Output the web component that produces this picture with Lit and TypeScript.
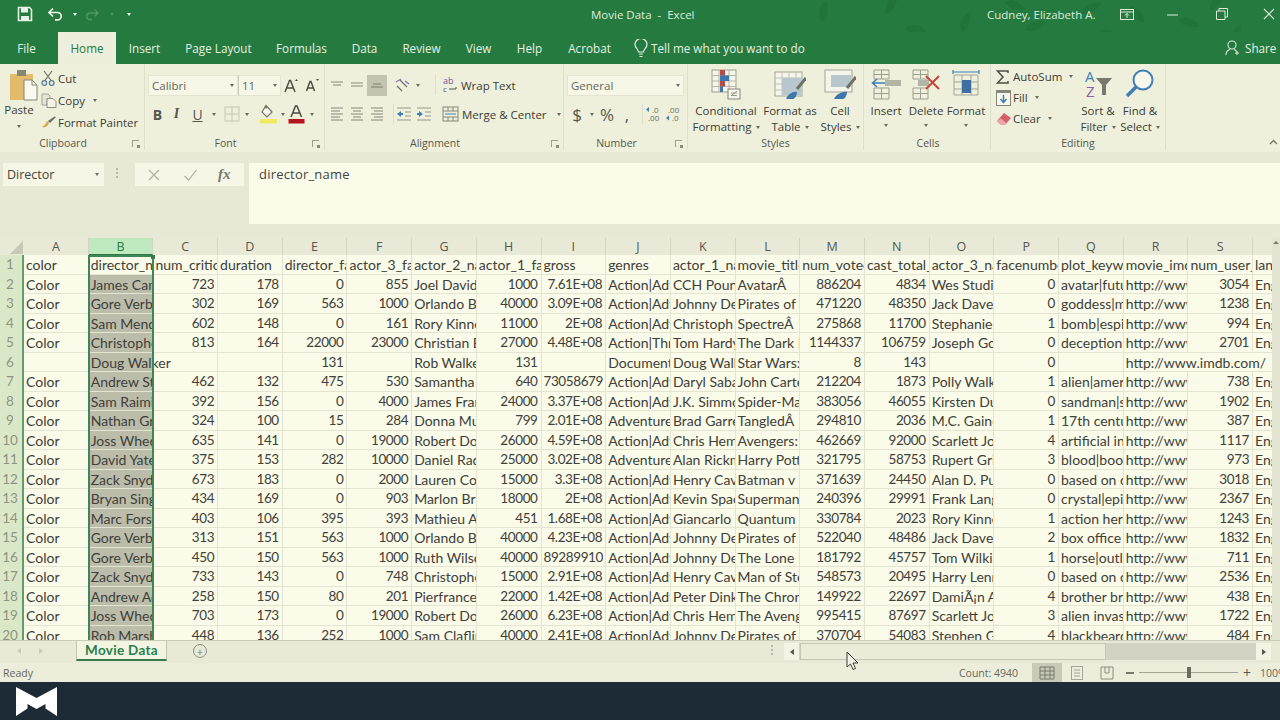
import { LitElement, html, css, svg } from 'lit';
import { customElement } from 'lit/decorators.js';

const COLS = 'ABCDEFGHIJKLMNOPQRS'.split('');
const HEAD = ['color', 'director_name', 'num_critic_for_reviews', 'duration', 'director_facebook_likes', 'actor_3_facebook_likes', 'actor_2_name', 'actor_1_facebook_likes', 'gross', 'genres', 'actor_1_name', 'movie_title', 'num_voted_users', 'cast_total_facebook_likes', 'actor_3_name', 'facenumber_in_poster', 'plot_keywords', 'movie_imdb_link', 'num_user_for_reviews', 'language'];
const W = 'http://www.imdb.com/title';
const ROWS: string[][] = [
  ['Color', 'James Cameron', '723', '178', '0', '855', 'Joel David Moore', '1000', '7.61E+08', 'Action|Adventure', 'CCH Pounder', 'AvatarÂ', '886204', '4834', 'Wes Studi', '0', 'avatar|future', W, '3054', 'English'],
  ['Color', 'Gore Verbinski', '302', '169', '563', '1000', 'Orlando Bloom', '40000', '3.09E+08', 'Action|Adventure', 'Johnny Depp', 'Pirates of the', '471220', '48350', 'Jack Davenport', '0', 'goddess|marriage', W, '1238', 'English'],
  ['Color', 'Sam Mendes', '602', '148', '0', '161', 'Rory Kinnear', '11000', '2E+08', 'Action|Adventure', 'Christoph Waltz', 'SpectreÂ', '275868', '11700', 'Stephanie Sigman', '1', 'bomb|espionage', W, '994', 'English'],
  ['Color', 'Christopher Nolan', '813', '164', '22000', '23000', 'Christian Bale', '27000', '4.48E+08', 'Action|Thriller', 'Tom Hardy', 'The Dark Knight', '1144337', '106759', 'Joseph Gordon', '0', 'deception', W, '2701', 'English'],
  ['', 'Doug Walker', '', '', '131', '', 'Rob Walker', '131', '', 'Documentary', 'Doug Walker', 'Star Wars:', '8', '143', '', '0', '', 'http://www.imdb.com/', '', ''],
  ['Color', 'Andrew Stanton', '462', '132', '475', '530', 'Samantha Morton', '640', '73058679', 'Action|Adventure', 'Daryl Sabara', 'John Carter', '212204', '1873', 'Polly Walker', '1', 'alien|american', W, '738', 'English'],
  ['Color', 'Sam Raimi', '392', '156', '0', '4000', 'James Franco', '24000', '3.37E+08', 'Action|Adventure', 'J.K. Simmons', 'Spider-Man', '383056', '46055', 'Kirsten Dunst', '0', 'sandman|spider', W, '1902', 'English'],
  ['Color', 'Nathan Greno', '324', '100', '15', '284', 'Donna Murphy', '799', '2.01E+08', 'Adventure|Animation', 'Brad Garrett', 'TangledÂ', '294810', '2036', 'M.C. Gainey', '1', '17th century', W, '387', 'English'],
  ['Color', 'Joss Whedon', '635', '141', '0', '19000', 'Robert Downey', '26000', '4.59E+08', 'Action|Adventure', 'Chris Hemsworth', 'Avengers:', '462669', '92000', 'Scarlett Johansson', '4', 'artificial intel', W, '1117', 'English'],
  ['Color', 'David Yates', '375', '153', '282', '10000', 'Daniel Radcliffe', '25000', '3.02E+08', 'Adventure|Family', 'Alan Rickman', 'Harry Potter', '321795', '58753', 'Rupert Grint', '3', 'blood|book', W, '973', 'English'],
  ['Color', 'Zack Snyder', '673', '183', '0', '2000', 'Lauren Cohan', '15000', '3.3E+08', 'Action|Adventure', 'Henry Cavill', 'Batman v', '371639', '24450', 'Alan D. Purwin', '0', 'based on comic', W, '3018', 'English'],
  ['Color', 'Bryan Singer', '434', '169', '0', '903', 'Marlon Brando', '18000', '2E+08', 'Action|Adventure', 'Kevin Spacey', 'Superman', '240396', '29991', 'Frank Langella', '0', 'crystal|epic', W, '2367', 'English'],
  ['Color', 'Marc Forster', '403', '106', '395', '393', 'Mathieu Amalric', '451', '1.68E+08', 'Action|Adventure', 'Giancarlo', 'Quantum', '330784', '2023', 'Rory Kinnear', '1', 'action hero', W, '1243', 'English'],
  ['Color', 'Gore Verbinski', '313', '151', '563', '1000', 'Orlando Bloom', '40000', '4.23E+08', 'Action|Adventure', 'Johnny Depp', 'Pirates of', '522040', '48486', 'Jack Davenport', '2', 'box office', W, '1832', 'English'],
  ['Color', 'Gore Verbinski', '450', '150', '563', '1000', 'Ruth Wilson', '40000', '89289910', 'Action|Adventure', 'Johnny Depp', 'The Lone Ranger', '181792', '45757', 'Tom Wilkinson', '1', 'horse|outlaw', W, '711', 'English'],
  ['Color', 'Zack Snyder', '733', '143', '0', '748', 'Christopher Meloni', '15000', '2.91E+08', 'Action|Adventure', 'Henry Cavill', 'Man of Steel', '548573', '20495', 'Harry Lennix', '0', 'based on comic', W, '2536', 'English'],
  ['Color', 'Andrew Adamson', '258', '150', '80', '201', 'Pierfrancesco', '22000', '1.42E+08', 'Action|Adventure', 'Peter Dinklage', 'The Chronicles', '149922', '22697', 'DamiÃ¡n Alcazar', '4', 'brother brother', W, '438', 'English'],
  ['Color', 'Joss Whedon', '703', '173', '0', '19000', 'Robert Downey', '26000', '6.23E+08', 'Action|Adventure', 'Chris Hemsworth', 'The Avengers', '995415', '87697', 'Scarlett Johansson', '3', 'alien invasion', W, '1722', 'English'],
  ['Color', 'Rob Marshall', '448', '136', '252', '1000', 'Sam Claflin', '40000', '2.41E+08', 'Action|Adventure', 'Johnny Depp', 'Pirates of the', '370704', '54083', 'Stephen Graham', '4', 'blackbeard', W, '484', 'English'],
];

const icon = (w: number, h: number, body: unknown) =>
  html`<svg class="ic" width=${w} height=${h} viewBox="0 0 ${w} ${h}">${body}</svg>`;

const lines = (rows: [number, number, number][], color = '#77796c') =>
  rows.map(([y, a, b]) => svg`<line x1=${a} x2=${b} y1=${y} y2=${y} stroke=${color} stroke-width="1"/>`);

const IC = {
  save: icon(16, 16, svg`<path d="M1.5 1.5h11l2 2v11h-13z" fill="none" stroke="#e8f1e6" stroke-width="1.6"/><rect x="4" y="2" width="7" height="4.5" fill="#e8f1e6"/><rect x="4" y="10" width="8" height="4.5" fill="#e8f1e6"/>`),
  undo: icon(16, 14, svg`<path d="M1 5.5h8.5a3.6 3.6 0 0 1 0 7.4H7" fill="none" stroke="#eef5ea" stroke-width="1.7"/><path d="M5 1.5 1 5.5l4 4" fill="none" stroke="#eef5ea" stroke-width="1.7"/>`),
  redo: icon(14, 13, svg`<path d="M13 5H5a3 3 0 0 0 0 6.5h2M9.5 1.5 13 5l-3.500 3.500" fill="none" stroke="#4d9a67" stroke-width="1.400"/>`),
  clip: icon(30, 32, svg`<rect x="0" y="5" width="23" height="26" fill="#e3bb6c"/><rect x="7" y="1" width="9" height="6" fill="#8a8674"/><path d="M14 11h8l5 5v15H14z" fill="#f9f9ee" stroke="#85877a"/><path d="M22 11v5h5" fill="none" stroke="#85877a"/>`),
  cut: icon(14, 16, svg`<path d="M3 1l7.500 10M11 1 3.500 11" stroke="#6f7165" stroke-width="1.200" fill="none"/><circle cx="3.300" cy="13" r="2.300" fill="none" stroke="#5a7d99" stroke-width="1.300"/><circle cx="10.700" cy="13" r="2.300" fill="none" stroke="#5a7d99" stroke-width="1.300"/>`),
  copy: icon(16, 15, svg`<path d="M1 1h6l2 2v3H6v6H1z" fill="#e6e6d6" stroke="#a3a597"/><path d="M6 5.500h6l3 3v6H6z" fill="#f5f5e8" stroke="#8c8e80"/>`),
  painter: icon(16, 13, svg`<path d="M1 11c3 1 6-1 7-4L6 5C5 8 3 10 1 11z" fill="#d9a64a"/><path d="M7 5l2 2 6-6-1.500-.5z" fill="#6a6c60"/>`),
  bigA: icon(14, 15, svg`<path d="M1 14 5.500 2.500h1L11 14M3 10h7" fill="none" stroke="#4d4f46" stroke-width="1.500"/><path d="M11 3l1.500-2L14 3z" fill="#4d4f46"/>`),
  smallA: icon(14, 14, svg`<path d="M1.500 13 5 3.500h1L9.500 13M3 10h5" fill="none" stroke="#4d4f46" stroke-width="1.500"/><path d="M11 1l1.500 2L14 1z" fill="#4d4f46"/>`),
  borders: icon(16, 16, svg`<rect x="1" y="1" width="14" height="14" fill="none" stroke="#c5c7b8"/><path d="M8 1v14M1 8h14" stroke="#c5c7b8"/>`),
  fill: icon(20, 20, svg`<path d="M8 1.500 14 8l-5 5-5-5z" fill="#f7f7ec" stroke="#77796c" stroke-width="1.200"/><circle cx="8" cy="3" r="1.500" fill="#77796c"/><rect x="2" y="15" width="17" height="4.500" fill="#f0ea62"/>`),
  fontColor: icon(17, 20, svg`<path d="M3 13 7.500 2h1.500L13.500 13M5 9h6.500" fill="none" stroke="#4a4c44" stroke-width="1.500"/><rect x="0.500" y="15" width="16" height="4.500" fill="#b4141e"/>`),
  alT: icon(14, 8, lines([[1, 1, 13], [4, 3, 11]], '#8a8c7e')),
  alM: icon(14, 8, lines([[2, 1, 13], [5, 1, 13]], '#8a8c7e')),
  alB: icon(14, 10, lines([[4, 3, 11], [7, 1, 13]], '#7f8174')),
  orient: icon(16, 14, svg`<path d="M2 8l5 5M5 2l7 7" stroke="#6f7165" stroke-width="1.200" fill="none"/><path d="M1 4l5-3M10 3l4 3" stroke="#8c6fb0" stroke-width="1.200" fill="none"/>`),
  alL: icon(14, 14, lines([[1, 1, 13], [4, 1, 10], [7, 1, 13], [10, 1, 10], [13, 1, 13]], '#85877a')),
  alC: icon(14, 14, lines([[1, 1, 13], [4, 3, 11], [7, 1, 13], [10, 3, 11], [13, 1, 13]], '#85877a')),
  alR: icon(14, 14, lines([[1, 1, 13], [4, 4, 13], [7, 1, 13], [10, 4, 13], [13, 1, 13]], '#85877a')),
  indL: icon(16, 14, svg`${lines([[1, 1, 15], [13, 1, 15], [5, 9, 15], [9, 9, 15]], '#97998b')}<path d="M1 7l4-3v6z" fill="#3f7fb5"/><rect x="4" y="6" width="3" height="2" fill="#3f7fb5"/>`),
  indR: icon(16, 14, svg`${lines([[1, 1, 15], [13, 1, 15], [5, 9, 15], [9, 9, 15]], '#97998b')}<path d="M7 7 3 4v6z" fill="#3f7fb5"/><rect x="1" y="6" width="3" height="2" fill="#3f7fb5"/>`),
  wrap: icon(14, 16, svg`<text x="0" y="7" font-size="9" fill="#6f5a9c" font-family="Open Sans">ab</text><text x="0" y="15" font-size="8" fill="#555" font-family="Open Sans">c</text><path d="M6 12h7v-2" stroke="#555" fill="none"/>`),
  merge: icon(17, 16, svg`<rect x="1" y="1" width="15" height="14" fill="none" stroke="#85877a"/><path d="M1 5h15M1 11h15M6 1v4M11 1v4M6 11v4M11 11v4" stroke="#85877a"/><path d="M3 8h11" stroke="#3f7fb5"/>`),
  dec1: icon(18, 16, svg`<path d="M1 3.500 4 1v5z" fill="#3f7fb5"/><text x="7" y="7" font-size="8" fill="#6a6c60" font-family="Open Sans">.0</text><text x="3" y="15" font-size="8" fill="#6a6c60" font-family="Open Sans">.00</text>`),
  dec2: icon(18, 16, svg`<text x="3" y="7" font-size="8" fill="#6a6c60" font-family="Open Sans">.00</text><path d="M1 12l3-2.500v5z" fill="#3f7fb5"/><text x="7" y="15" font-size="8" fill="#6a6c60" font-family="Open Sans">.0</text>`),
  cond: icon(30, 31, svg`<rect x="1" y="1" width="24" height="22" fill="#f5f5e9" stroke="#9d9f91"/><path d="M1 6.500h24M1 12h24M1 17.500h24M8 1v22M18 1v22" stroke="#b5b7a9"/><rect x="9" y="1" width="5" height="5.500" fill="#b84a45"/><rect x="9" y="6.500" width="9" height="5.500" fill="#3e77ab"/><rect x="9" y="12" width="5" height="5.500" fill="#b84a45"/><rect x="9" y="17.500" width="3" height="5.500" fill="#3e77ab"/><rect x="17" y="20" width="12" height="10" fill="#f5f5e9" stroke="#85877a"/><path d="M20 27l6-5M20 24h6M20 26.500h6" stroke="#85877a" stroke-width=".8"/>`),
  table: icon(32, 31, svg`<rect x="1" y="3" width="27" height="24" fill="#f5f5e9" stroke="#a3a597"/><path d="M1 9h27M1 15h27M1 21h27M8 3v24M15 3v24M22 3v24" stroke="#c0c2b4"/><rect x="8" y="9" width="19" height="17" fill="#b8c6ce"/><path d="M32 9l-9 11" stroke="#6e7064" stroke-width="3"/><path d="M12 30c2-5 7-8 11-7 0 3-2 7-4 7z" fill="#3e77ab"/>`),
  cellst: icon(32, 31, svg`<rect x="1" y="1" width="27" height="22" fill="#f5f5e9" stroke="#a3a597"/><rect x="7" y="6" width="20" height="12" fill="#b8c6ce"/><path d="M32 8l-9 11" stroke="#6e7064" stroke-width="3"/><path d="M10 30c2-5 9-8 13-7 0 3-2 7-4 7z" fill="#3e77ab"/>`),
  insert: icon(30, 32, svg`<path d="M3 1h15v9H3zM3 5.500h15M10.500 1v9M3 19h15v11H3zM3 24.500h15M10.500 19v11" fill="none" stroke="#9d9f91"/><rect x="14" y="11" width="16" height="6" fill="#b2b4a6"/><path d="M1 14h13M6 10l-4.500 4L6 18" fill="none" stroke="#3f7fb5" stroke-width="1.500"/>`),
  del: icon(32, 32, svg`<path d="M3 1h15v9H3zM3 5.500h15M10.500 1v9M3 19h15v11H3zM3 24.500h15M10.500 19v11" fill="none" stroke="#9d9f91"/><rect x="8" y="11" width="11" height="6" fill="#b2b4a6"/><path d="M16 7l13 13M29 7 16 20" stroke="#c4483c" stroke-width="2"/>`),
  format: icon(30, 33, svg`<path d="M3 6h24v20H3zM3 13h24M3 20h24M11 6v20M20 6v20" fill="none" stroke="#a3a597"/><rect x="11" y="11" width="9" height="13" fill="#3e6fa3"/><path d="M2 3h26M2 1v4M28 1v4" stroke="#3f7fb5" stroke-width="1.200"/>`),
  sigma: icon(13, 14, svg`<path d="M12 3V1H1.500L7 7 1.500 13H12v-2" fill="none" stroke="#4d4f46" stroke-width="1.500"/>`),
  fillDown: icon(15, 16, svg`<rect x=".5" y=".5" width="14" height="15" fill="#f7f7ec" stroke="#85877a"/><path d="M1 2h13" stroke="#85877a" stroke-width="2"/><path d="M7.500 5v7M4.500 9l3 3.500 3-3.500" stroke="#3f7fb5" stroke-width="1.500" fill="none"/>`),
  eraser: icon(16, 14, svg`<path d="M1 9l7-8 7 5-6 7H5z" fill="#d5606b"/><path d="M1 9l4 4h4l1.500-1.700L5 6.500z" fill="#eaa6ad"/>`),
  sort: icon(30, 30, svg`<text x="2" y="13" font-size="15" fill="#3f7fb5" font-family="Open Sans">A</text><text x="3" y="28" font-size="15" fill="#8c5fa8" font-family="Open Sans">Z</text><path d="M13 9h16l-6 7v10h-4V16z" fill="#77796c"/>`),
  find: icon(30, 30, svg`<circle cx="18" cy="11" r="9.500" fill="#f7f7ec" stroke="#3f7fb5" stroke-width="2"/><path d="M11 18 2 27" stroke="#3f7fb5" stroke-width="3.500"/>`),
  bulb: icon(14, 19, svg`<path d="M4.500 13c0-3-3.500-4-3.500-7.500a6 6 0 0 1 12 0C13 9 9.500 10 9.500 13z" fill="none" stroke="#e6f0e2" stroke-width="1.200"/><path d="M5 15h4M5.500 17.500h3" stroke="#e6f0e2" stroke-width="1.200"/>`),
  share: icon(16, 16, svg`<circle cx="7" cy="5" r="4" fill="none" stroke="#dfeadb" stroke-width="1.100"/><path d="M1 15c0-3 2-5 4-5.500M9 9.500c1 .3 2 1 2.500 2M12 11v4M10 13h4" fill="none" stroke="#dfeadb" stroke-width="1.100"/>`),
  cross: icon(14, 14, svg`<path d="M2 2l10 10M12 2 2 12" stroke="#b0b2a4" stroke-width="1.200"/>`),
  check: icon(15, 14, svg`<path d="M1.500 8l4 4L13.500 2" fill="none" stroke="#b0b2a4" stroke-width="1.200"/>`),
  ribbonOpt: icon(14, 11, svg`<rect x=".5" y=".5" width="13" height="10" fill="none" stroke="#dfeadb"/><path d="M.5 3h13M7 9V4.500M5 6.500l2-2 2 2" stroke="#dfeadb" fill="none"/>`),
  minimize: icon(11, 11, svg`<path d="M0 6h11" stroke="#dfeadb"/>`),
  restore: icon(12, 12, svg`<path d="M.5 3h8.500v8.500H.5zM3 3V.5h8.500V9H9" fill="none" stroke="#dfeadb"/>`),
  close: icon(12, 12, svg`<path d="M1 1l10 10M11 1 1 11" stroke="#dfeadb" stroke-width="1.100"/>`),
  viewNormal: icon(16, 14, svg`<path d="M1 1h14v12H1zM1 5h14M1 9h14M6 1v12M11 1v12" fill="none" stroke="#77796c"/>`),
  viewPage: icon(12, 14, svg`<rect x=".5" y=".5" width="11" height="13" fill="none" stroke="#a3a597"/><path d="M3 4h6M3 7h6M3 10h6" stroke="#a3a597"/>`),
  viewBreak: icon(14, 14, svg`<path d="M1 1h12v12H1zM5 1v6h4V1" fill="none" stroke="#8c8e80"/>`),
  collapse: icon(9, 6, svg`<path d="M1 5l3.500-3.500L8 5" fill="none" stroke="#77796c" stroke-width="1.300"/>`),
};

const LEAF = 'M0 0C5-6 15-6 22 0 15 5 5 5 0 0z';
const LEAVES: [number, number, number][] = [
  [886, 14, -60], [905, 28, 10], [962, 32, -70], [1005, 2, 20], [1045, 22, 160], [1082, 14, -30],
  [1100, 30, 30], [1130, 6, 50], [1178, 20, 15], [1210, 10, -50], [1240, 26, 120], [822, 22, -80], [1150, 36, 20],
];

@customElement('app-root')
export class AppRoot extends LitElement {
  static styles = css`
    :host {
      display: flex;
      flex-direction: column;
      width: 1280px;
      height: 720px;
      overflow: hidden;
      background: #ebecda;
      color: #3b3d36;
      font-family: 'Open Sans', sans-serif;
      font-size: 11.5px;
      position: relative;
    }
    .ic { display: block; flex: none; }

    .titlebar {
      height: 32px;
      padding-bottom: 4px;
      box-sizing: border-box;
      background: #257b3f;
      color: #dfeadb;
      display: flex;
      align-items: center;
      position: relative;
      overflow: hidden;
      flex: none;
    }
    .leaves { position: absolute; left: 0; top: 0; }
    .qat { width: 591px; display: flex; align-items: center; padding-left: 17px; box-sizing: border-box; flex: none; gap: 3px; position: relative; }
    .qat .undo { margin-left: 12px; }
    .tcaret { width: 0; height: 0; border: 2.5px solid transparent; border-top: 3px solid #eef5ea; border-bottom: 0; margin-left: 6px; }
    .tcaret.off { border-top-color: #4d9a67; margin-left: 8px; }
    .qat .redo { margin-left: 5px; }
    .qat .custom { margin-left: 10px; }
    .doc { width: 396px; flex: none; font-size: 11.5px; position: relative; white-space: pre; }
    .user { width: 133px; flex: none; font-size: 11.5px; position: relative; }
    .winbtn { display: flex; align-items: center; position: relative; }
    .winbtn .restore { margin-left: 38px; }
    .winbtn .minimize { margin-left: 33px; }
    .winbtn .close { margin-left: 35px; }

    .tabs {
      height: 32px;
      background: #257b3f;
      color: #e6f0e2;
      display: flex;
      align-items: center;
      flex: none;
      font-size: 11.7px;
    }
    .tab { box-sizing: border-box; text-align: center; height: 32px; line-height: 33px; flex: none; }
    .tab.file { width: 58px; padding-right: 5px; }
    .tab.home { width: 58px; background: #edeedb; color: #257b3f; }
    .tab.w-ins { width: 57px; }
    .tab.w-pl { width: 91px; }
    .tab.w-for { width: 75px; }
    .tab.w-dat { width: 51px; }
    .tab.w-rev { width: 63px; }
    .tab.w-vie { width: 51px; }
    .tab.w-hel { width: 51px; }
    .tab.w-acr { width: 67px; margin-left: 1px; }
    .tell { display: flex; align-items: center; gap: 3px; margin-left: 11px; width: 591px; }
    .shr { display: flex; align-items: center; gap: 4px; }

    .ribbon {
      height: 88px;
      background: #eef0dc;
      display: flex;
      flex: none;
      white-space: nowrap;
    }
    .collapse { margin-left: auto; align-self: flex-end; padding: 0 2px 7px 0; }
    .group {
      box-sizing: border-box;
      border-right: 1px solid #dddfcb;
      display: flex;
      flex-direction: column;
      height: 86px;
      flex: none;
    }
    .gbody { height: 71px; display: flex; flex: none; }
    .glabel {
      flex: 1;
      display: flex;
      justify-content: center;
      align-items: center;
      position: relative;
      font-size: 10.5px;
      color: #55574d;
    }
    .glabel.lc { padding-right: 18px; }
    .launch { position: absolute; right: 5px; top: 5px; width: 6px; height: 6px; border-left: 1px solid #9d9f91; border-top: 1px solid #9d9f91; }
    .launch::after { content: ''; position: absolute; right: -1px; bottom: -1px; width: 3px; height: 3px; background: #8a8c7e; }

    .caret { width: 0; height: 0; border: 2.5px solid transparent; border-top: 3px solid #6a6c60; border-bottom: 0; flex: none; }
    .g-clip { width: 145px; }
    .paste { width: 41px; display: flex; flex-direction: column; align-items: center; padding-top: 5px; box-sizing: border-box; flex: none; }
    .paste .art { margin-left: 8px; }
    .paste .lb { margin-top: 1px; line-height: 16px; margin-right: 3px; }
    .paste .caret { margin-top: 7px; margin-right: 3px; }
    .clip-list { display: flex; flex-direction: column; padding-top: 3px; }
    .cl { display: flex; align-items: center; height: 22px; }
    .cl .slot { width: 17px; flex: none; }
    .cl .caret { margin-left: 8px; }

    .g-font { width: 180px; }
    .two { display: flex; flex-direction: column; flex: 1; padding-top: 11px; gap: 9px; }
    .r { display: flex; align-items: center; height: 20px; }
    .combo { box-sizing: border-box; height: 21px; background: #f6f7e7; border: 1px solid #e3e5d1; display: flex; align-items: center; justify-content: space-between; padding: 0 3px; color: #66685c; }
    .combo.font { width: 90px; margin-left: 3px; }
    .combo.size { width: 43px; border-left-color: #c9cbb9; }
    .r .a-big { margin-left: 3px; }
    .r .a-small { margin-left: 7px; }
    .fmt { width: 19px; text-align: center; font-size: 14px; color: #55574d; font-family: 'Liberation Serif', serif; }
    .fmt.b { font-weight: 700; font-family: 'Open Sans', sans-serif; margin-left: 3px; }
    .fmt.i { font-style: italic; font-weight: 700; }
    .fmt.u { text-decoration: underline; font-family: 'Open Sans', sans-serif; margin-left: 2px; }
    .r .caret.sm { margin: 0 5px; }
    .r .caret.fc { margin: 0 3px; }
    .b-slot { margin-left: 3px; }
    .f-slot { margin-left: 4px; }

    .g-align { width: 239px; }
    .al-top { width: 20px; height: 21px; display: flex; align-items: center; justify-content: center; flex: none; }
    .al-top.first { margin-left: 2px; }
    .al-top.on { background: #c2c3b0; }
    .al-gap { margin-left: 8px; }
    .sep { width: 1px; height: 20px; background: #dddfcb; flex: none; margin-left: 6px; }
    .sep.w { margin: 0 4px 0 10px; }
    .wt { display: flex; align-items: center; gap: 4px; margin-left: 3px; }
    .ind { width: 20px; display: flex; justify-content: center; flex: none; }
    .mg { margin-left: 8px; display: flex; align-items: center; gap: 3px; }
    .mg .caret { margin-left: 7px; }

    .g-num { width: 124px; }
    .combo.gen { width: 117px; margin-left: 3px; }
    .sym { font-size: 17px; color: #55574d; width: 20px; text-align: center; flex: none; }
    .num-row { padding-left: 3px; }
    .num-row .caret { margin: 0 3px; }
    .num-row .sep { margin: 0 2px 0 5px; }
    .num-row .d2 { margin-left: 2px; }

    .g-sty { width: 176px; }
    .big { display: flex; flex-direction: column; align-items: center; padding-top: 5px; box-sizing: border-box; flex: none; line-height: 16px; }
    .big .art { height: 33px; display: flex; align-items: flex-start; justify-content: center; margin-bottom: 1px; }
    .bl { display: flex; align-items: center; gap: 4px; white-space: nowrap; }
    .sty-cf { width: 76px; }
    .sty-ft { width: 60px; margin-left: -4px; }
    .sty-cs { width: 40px; }
    .g-cel { width: 127px; padding-left: 2px; }
    .cel { width: 40px; }
    .cel .caret { margin-top: 5px; }
    .g-edi { width: 175px; }
    .edi-list { display: flex; flex-direction: column; padding: 2px 0 0 5px; width: 87px; box-sizing: border-box; flex: none; }
    .edi-list .cl { height: 21px; }
    .edi-list .slot { width: 17px; }
    .edi-list .caret { margin-left: 7px; }
    .sf { width: 40px; }
    .sf2 { width: 36px; margin-left: 4px; }

    .gapband { height: 11px; background: #e7e8d5; flex: none; }
    .formula { height: 62px; background: #e7e8d5; display: flex; align-items: flex-start; flex: none; }
    .namebox { box-sizing: border-box; width: 101px; height: 23px; margin-left: 3px; background: #f5f6e5; display: flex; align-items: center; justify-content: space-between; padding: 0 5px 0 4px; font-size: 12.500px; color: #44463d; flex: none; }
    .dots { margin-left: 12px; width: 3px; display: flex; flex-direction: column; gap: 2px; padding-top: 5px; }
    .dots i { display: block; width: 2px; height: 2px; background: #b5b7a9; }
    .fxbox { box-sizing: border-box; width: 109px; height: 23px; margin-left: 16px; background: #f5f6e5; display: flex; align-items: center; padding-left: 12px; flex: none; color: #77796c; }
    .fxbox .check { margin-left: 22px; }
    .fxbox .fx { margin-left: 20px; font-family: 'Liberation Serif', serif; font-style: italic; font-size: 15px; font-weight: 700; }
    .fbar { flex: 1; height: 61px; margin-left: 5px; background: #fafbe9; font-size: 13px; color: #44463d; padding: 2px 10px; box-sizing: border-box; letter-spacing: .2px; }
    .fgap { height: 13px; background: #e7e8d5; flex: none; }

    .sheetwrap { height: 402px; position: relative; overflow: hidden; flex: none; background: #fafbe9; }
    .sheet {
      display: grid;
      grid-template-columns: 24px repeat(19, 64.7px) 20px;
      grid-template-rows: 17px;
      grid-auto-rows: 19.5px;
      font-family: Lato, sans-serif;
      font-size: 14px;
      color: #3e4039;
    }
    .corner { background: #e8e9d6; display: flex; align-items: flex-end; justify-content: flex-end; padding: 0 1px 1px 0; box-sizing: border-box; }
    .corner::after { content: ''; width: 0; height: 0; border-left: 13px solid transparent; border-bottom: 13px solid #c6c8b8; }
    .ch { background: #e8e9d6; border-right: 1px solid #d2d4c1; text-align: center; line-height: 17px; color: #55574d; box-sizing: border-box; font-family: 'Open Sans', sans-serif; font-size: 12.500px; }
    .ch.on { background: #bfeac0; color: #2b7a45; border-bottom: 1px solid #2b7a45; }
    .rh { background: #dbe8c8; border-right: 2px solid #5f9c72; color: #8d9483; text-align: center; font-size: 13.500px; line-height: 19.5px; box-sizing: border-box; padding-right: 2px; }
    .c {
      box-sizing: border-box;
      border-right: 1px solid #e3e5d0;
      border-bottom: 1px solid #e3e5d0;
      line-height: 19.5px;
      padding: 0 3px 0 2px;
      white-space: nowrap;
      overflow: hidden;
      min-width: 0;
    }
    .c.n { text-align: right; font-size: 13.5px; letter-spacing: -.4px; }
    .c.s { background: #bbbcaa; }
    .c.over { overflow: visible; position: relative; z-index: 1; border-right-color: transparent; }
    .c.span3 { grid-column: span 3; }
    .sel {
      position: absolute;
      left: 88px;
      top: 17px;
      width: 66px;
      height: 400px;
      box-sizing: border-box;
      border: 2px solid #3f8558;
      border-bottom: 0;
      pointer-events: none;
      z-index: 2;
    }
    .handle { position: absolute; right: -3px; top: -2px; width: 4px; height: 4px; background: #35794c; }
    .vscroll { position: absolute; right: 0; top: 0; width: 8px; height: 402px; background: #e3e4d2; }
    .vscroll::before { content: ''; position: absolute; left: 1px; top: 3px; border: 3px solid transparent; border-bottom: 3px solid #77796c; border-top: 0; }

    .sheetbar { height: 23px; background: #e8e9d6; border-top: 1px solid #c9cbb9; box-sizing: border-box; display: flex; align-items: flex-start; flex: none; position: relative; }
    .nav { width: 76px; display: flex; align-items: center; padding: 7px 0 0 17px; gap: 18px; box-sizing: border-box; flex: none; }
    .nav i { width: 0; height: 0; border: 3px solid transparent; display: block; }
    .nav .l { border-right: 4px solid #c9cbb9; border-left: 0; }
    .nav .r2 { border-left: 4px solid #c9cbb9; border-right: 0; }
    .stab { width: 91px; height: 20px; background: #f3f4e2; border: 1px solid #c3c5b3; border-top: 0; border-bottom: 2px solid #35794c; box-sizing: border-box; text-align: center; color: #2b7f4a; font-weight: 700; font-size: 13.5px; line-height: 18px; flex: none; font-family: Lato, sans-serif; letter-spacing: .3px; }
    .plus { width: 14px; height: 14px; border: 1px solid #8c8e80; border-radius: 50%; margin: 3px 0 0 26px; box-sizing: border-box; display: flex; align-items: center; justify-content: center; color: #77796c; font-size: 11px; line-height: 1; flex: none; }
    .sdots { margin-left: 564px; margin-top: 4px; display: flex; flex-direction: column; gap: 2px; width: 13px; flex: none; }
    .sdots i { width: 2px; height: 2px; background: #b5b7a9; display: block; }
    .hs { display: flex; width: 487px; height: 17px; margin-top: 2px; background: #d2d3c2; flex: none; align-items: stretch; }
    .hs .arr { width: 15px; background: #f3f4e3; display: flex; align-items: center; justify-content: center; flex: none; }
    .hs .thumb { width: 306px; background: #eaebd9; border: 1px solid #c5c7b5; box-sizing: border-box; margin-left: 1px; flex: none; }
    .hs .fillr { flex: 1; }
    .tl { width: 0; height: 0; border: 3px solid transparent; border-right: 4px solid #55574d; border-left: 0; }
    .tr { width: 0; height: 0; border: 3px solid transparent; border-left: 4px solid #55574d; border-right: 0; }

    .status { height: 19px; background: #eceddb; display: flex; align-items: center; flex: none; font-size: 10.500px; color: #66685c; }
    .status .ready { width: 959px; padding-left: 3px; box-sizing: border-box; flex: none; }
    .status .count { width: 73px; flex: none; white-space: nowrap; }
    .vb { width: 30px; height: 19px; display: flex; align-items: center; justify-content: center; flex: none; }
    .vb.on { background: #c8cab7; }
    .zoomctl { display: flex; align-items: center; margin-left: 4px; flex: none; }
    .zm { width: 8px; height: 2px; background: #77796c; flex: none; }
    .zline { position: relative; width: 99px; height: 1px; background: #a3a597; margin: 0 4px 0 5px; flex: none; }
    .zline::after { content: ''; position: absolute; left: 48px; top: -5px; width: 4px; height: 11px; background: #6a6c60; }
    .zp { font-size: 14px; color: #55574d; width: 10px; line-height: 1; text-align: center; flex: none; }
    .pct { margin-left: 8px; white-space: nowrap; flex: none; }

    .band { flex: 1; background: #1c2b36; display: flex; align-items: center; padding-left: 16px; }
    .pointer { position: absolute; left: 846px; top: 651px; }
  `;

  private group(cls: string, label: string, launch: boolean, body: unknown) {
    return html`<div class="group ${cls}">
      <div class="gbody">${body}</div>
      <div class="glabel ${launch ? 'lc' : ''}">${label}${launch ? html`<span class="launch"></span>` : ''}</div>
    </div>`;
  }

  private renderTitle() {
    return html`<div class="titlebar">
      <svg class="leaves" width="1280" height="32">
        ${LEAVES.map(([x, y, r]) => svg`<path d=${LEAF} transform="translate(${x} ${y}) rotate(${r})" fill="#1f7238" opacity=".8"/>`)}
      </svg>
      <div class="qat">
        ${IC.save}<span class="undo">${IC.undo}</span><span class="tcaret"></span>
        <span class="redo">${IC.redo}</span><span class="tcaret off"></span>
        <span class="tcaret custom"></span>
      </div>
      <div class="doc">Movie Data  -  Excel</div>
      <div class="user">Cudney, Elizabeth A.</div>
      <div class="winbtn">${IC.ribbonOpt}<span class="minimize">${IC.minimize}</span><span class="restore">${IC.restore}</span><span class="close">${IC.close}</span></div>
    </div>`;
  }

  private renderTabs() {
    return html`<div class="tabs">
      <div class="tab file">File</div>
      <div class="tab home">Home</div>
      <div class="tab w-ins">Insert</div>
      <div class="tab w-pl">Page Layout</div>
      <div class="tab w-for">Formulas</div>
      <div class="tab w-dat">Data</div>
      <div class="tab w-rev">Review</div>
      <div class="tab w-vie">View</div>
      <div class="tab w-hel">Help</div>
      <div class="tab w-acr">Acrobat</div>
      <div class="tell">${IC.bulb}<span>Tell me what you want to do</span></div>
      <div class="shr">${IC.share}<span>Share</span></div>
    </div>`;
  }

  private renderRibbon() {
    const caret = html`<span class="caret"></span>`;
    return html`<div class="ribbon">
      ${this.group('g-clip', 'Clipboard', true, html`
        <div class="paste"><span class="art">${IC.clip}</span><span class="lb">Paste</span>${caret}</div>
        <div class="clip-list">
          <div class="cl"><span class="slot">${IC.cut}</span><span>Cut</span></div>
          <div class="cl"><span class="slot">${IC.copy}</span><span>Copy</span>${caret}</div>
          <div class="cl"><span class="slot">${IC.painter}</span><span>Format Painter</span></div>
        </div>`)}
      ${this.group('g-font', 'Font', true, html`
        <div class="two">
          <div class="r">
            <div class="combo font"><span>Calibri</span>${caret}</div>
            <div class="combo size"><span>11</span>${caret}</div>
            <span class="a-big">${IC.bigA}</span><span class="a-small">${IC.smallA}</span>
          </div>
          <div class="r">
            <span class="fmt b">B</span><span class="fmt i">I</span><span class="fmt u">U</span>
            <span class="caret sm"></span><span class="b-slot">${IC.borders}</span><span class="caret sm"></span>
            <span class="f-slot">${IC.fill}</span><span class="caret fc"></span>${IC.fontColor}<span class="caret sm"></span>
          </div>
        </div>`)}
      ${this.group('g-align', 'Alignment', true, html`
        <div class="two">
          <div class="r">
            <span class="al-top first">${IC.alT}</span><span class="al-top">${IC.alM}</span><span class="al-top on">${IC.alB}</span>
            <span class="al-gap">${IC.orient}</span><span class="caret sm"></span>
            <span class="sep w"></span>
            <span class="wt">${IC.wrap}<span>Wrap Text</span></span>
          </div>
          <div class="r">
            <span class="al-top first">${IC.alL}</span><span class="al-top">${IC.alC}</span><span class="al-top">${IC.alR}</span>
            <span class="sep"></span>
            <span class="ind">${IC.indL}</span><span class="ind">${IC.indR}</span>
            <span class="mg">${IC.merge}<span>Merge &amp; Center</span>${caret}</span>
          </div>
        </div>`)}
      ${this.group('g-num', 'Number', true, html`
        <div class="two">
          <div class="r"><div class="combo gen"><span>General</span>${caret}</div></div>
          <div class="r num-row">
            <span class="sym">$</span>${caret}<span class="sym">%</span><span class="sym">,</span>
            <span class="sep"></span>${IC.dec1}<span class="d2">${IC.dec2}</span>
          </div>
        </div>`)}
      ${this.group('g-sty', 'Styles', false, html`
        <div class="big sty-cf"><div class="art">${IC.cond}</div><span>Conditional</span><span class="bl">Formatting ${caret}</span></div>
        <div class="big sty-ft"><div class="art">${IC.table}</div><span>Format as</span><span class="bl">Table ${caret}</span></div>
        <div class="big sty-cs"><div class="art">${IC.cellst}</div><span>Cell</span><span class="bl">Styles ${caret}</span></div>`)}
      ${this.group('g-cel', 'Cells', false, html`
        <div class="big cel"><div class="art">${IC.insert}</div><span>Insert</span>${caret}</div>
        <div class="big cel"><div class="art">${IC.del}</div><span>Delete</span>${caret}</div>
        <div class="big cel"><div class="art">${IC.format}</div><span>Format</span>${caret}</div>`)}
      ${this.group('g-edi', 'Editing', false, html`
        <div class="edi-list">
          <div class="cl"><span class="slot">${IC.sigma}</span><span>AutoSum</span>${caret}</div>
          <div class="cl"><span class="slot">${IC.fillDown}</span><span>Fill</span>${caret}</div>
          <div class="cl"><span class="slot">${IC.eraser}</span><span>Clear</span>${caret}</div>
        </div>
        <div class="big sf"><div class="art">${IC.sort}</div><span>Sort &amp;</span><span class="bl">Filter ${caret}</span></div>
        <div class="big sf2"><div class="art">${IC.find}</div><span>Find &amp;</span><span class="bl">Select ${caret}</span></div>`)}
      <div class="collapse">${IC.collapse}</div>
    </div>`;
  }

  private renderFormula() {
    return html`<div class="gapband"></div>
      <div class="formula">
        <div class="namebox"><span>Director</span><span class="caret"></span></div>
        <div class="dots"><i></i><i></i><i></i></div>
        <div class="fxbox">${IC.cross}<span class="check">${IC.check}</span><span class="fx">fx</span></div>
        <div class="fbar">director_name</div>
      </div>
      <div class="fgap"></div>`;
  }

  // numbers and E-notation go right, text left, like excel does it
  private cell(v: string, i: number) {
    const numeric = /^[\d.]+(E\+\d+)?$/.test(v);
    const cls = ['c'];
    if (numeric) cls.push('n');
    if (i === 1) cls.push('s');
    return html`<div class=${cls.join(' ')}>${v}</div>`;
  }

  private renderSheet() {
    return html`<div class="sheetwrap">
      <div class="sheet">
        <div class="corner"></div>
        ${COLS.map((c) => html`<div class="ch ${c === 'B' ? 'on' : ''}">${c}</div>`)}
        <div class="ch"></div>
        <div class="rh">1</div>
        ${HEAD.map((h) => html`<div class="c">${h}</div>`)}
        ${ROWS.map((row, r) => html`
          <div class="rh">${r + 2}</div>
          ${row[1] === 'Doug Walker' ? this.renderOverflowRow(row) : row.map((v, i) => this.cell(v, i))}
        `)}
      </div>
      <div class="sel"><span class="handle"></span></div>
      <div class="vscroll"></div>
    </div>`;
  }

  // row 6 has no neighbours, so the name and the link run over into the empty cells
  private renderOverflowRow(row: string[]) {
    return html`
      <div class="c"></div>
      <div class="c s over">${row[1]}</div>
      <div class="c"></div>
      <div class="c"></div>
      ${row.slice(4, 17).map((v, i) => this.cell(v, i + 4))}
      <div class="c span3">${row[17]}</div>
    `;
  }

  private renderBottom() {
    return html`<div class="sheetbar">
        <div class="nav"><i class="l"></i><i class="r2"></i></div>
        <div class="stab">Movie Data</div>
        <div class="plus">+</div>
        <div class="sdots"><i></i><i></i><i></i></div>
        <div class="hs"><span class="arr"><span class="tl"></span></span><span class="thumb"></span><span class="fillr"></span><span class="arr"><span class="tr"></span></span></div>
      </div>
      <div class="status">
        <span class="ready">Ready</span>
        <span class="count">Count: 4940</span>
        <span class="vb on">${IC.viewNormal}</span><span class="vb">${IC.viewPage}</span><span class="vb">${IC.viewBreak}</span>
        <span class="zoomctl"><span class="zm"></span><span class="zline"></span><span class="zp">+</span><span class="pct">100%</span></span>
      </div>
      <div class="band">
        <svg width="41" height="29" viewBox="0 0 41 29"><path d="M0 0 20.500 11 41 0V29L29.500 21.500 29.500 17 20.500 22 11.500 17V21.500L0 29z" fill="#fff"/></svg>
      </div>
      <svg class="pointer" width="14" height="20" viewBox="0 0 14 20"><path d="M1 1v15l3.500-3 2.500 5.500 2.500-1-2.500-5.500h5z" fill="#f4f5e8" stroke="#3b3d36" stroke-width="1"/></svg>`;
  }

  render() {
    return html`${this.renderTitle()}${this.renderTabs()}${this.renderRibbon()}${this.renderFormula()}${this.renderSheet()}${this.renderBottom()}`;
  }
}
